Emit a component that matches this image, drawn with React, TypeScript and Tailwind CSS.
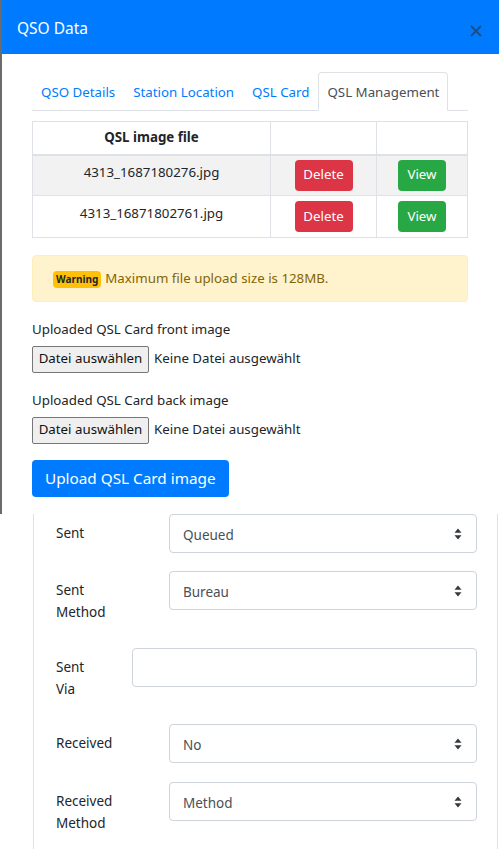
import React from "react";

// QSO modal (QSL Management tab) stacked over a crop of the QSL form below it.

const font = { fontFamily: '"Segoe UI", "Noto Sans", "Liberation Sans", sans-serif' };

function SortIcon(): JSX.Element {
  return (
    <svg width="8" height="12" viewBox="0 0 8 12" className="shrink-0">
      <path d="M4 0.5 L7.5 4.8 L0.5 4.8 Z" fill="#343a40" />
      <path d="M4 11.5 L7.5 7.2 L0.5 7.2 Z" fill="#343a40" />
    </svg>
  );
}

function Select({ value, left = "ml-[113px]" }: { value: string; left?: string }): JSX.Element {
  return (
    <div
      className={`${left} flex h-[39px] flex-1 items-center justify-between rounded-[4px] border border-[#ced4da] pl-[13px] pr-[14px] text-[13.5px] text-[#495057]`}
    >
      <span className="mt-[2px]">{value}</span>
      <SortIcon />
    </div>
  );
}

function FileInput(): JSX.Element {
  return (
    <div className="flex items-center text-[13.3px] text-[#212529]">
      <div className="flex h-[27px] w-[117px] items-center justify-center rounded-[2px] border border-[#767676] bg-[#efefef] text-[#111]">
        Datei auswählen
      </div>
      <span className="ml-[5px]">Keine Datei ausgewählt</span>
    </div>
  );
}

const files = ["4313_1687180276.jpg", "4313_16871802761.jpg"];

export default function App(): JSX.Element {
  return (
    <div className="relative h-[849px] w-[499px] overflow-hidden bg-white" style={font}>
      {/* modal */}
      <div className="h-[514px] border-l-[2px] border-[#6b6b6b] bg-white">
        <div className="flex h-[54px] items-center justify-between bg-[#007bff] pl-[15px] pr-[17px]">
          <span className="mt-[3px] text-[15.5px] text-white">QSO Data</span>
          <svg width="12" height="12" viewBox="0 0 12 12" className="mt-[8px]">
            <path d="M1 1 L11 11 M11 1 L1 11" stroke="#1d4f86" strokeWidth="2" />
          </svg>
        </div>

        <div className="pl-[30px] pr-[31px]">
          {/* tabs */}
          <div className="mt-[18px] flex h-[39px] border-b border-[#dee2e6] text-[13.3px]">
            <div className="px-[9px] pt-[11px] text-[#007bff]">QSO Details</div>
            <div className="px-[9px] pt-[11px] text-[#007bff]">Station Location</div>
            <div className="px-[9px] pt-[11px] text-[#007bff]">QSL Card</div>
            <div className="-mb-px rounded-t-[4px] border border-b-white border-[#dee2e6] bg-white px-[8px] pt-[10px] text-[#495057]">
              QSL Management
            </div>
          </div>

          {/* table */}
          <table className="mt-[10px] w-[436px] border-collapse text-[13.3px] text-[#212529]">
            <thead>
              <tr className="h-[33px]">
                <th className="w-[238px] border border-b-2 border-[#dee2e6] font-bold">QSL image file</th>
                <th className="w-[106px] border border-b-2 border-[#dee2e6]"></th>
                <th className="border border-b-2 border-[#dee2e6]"></th>
              </tr>
            </thead>
            <tbody>
              {files.map((f, i) => (
                <tr key={f} className={i === 0 ? "h-[41px] bg-[#f2f2f2]" : "h-[42px]"}>
                  <td className="border border-[#dee2e6] pb-[5px] text-center align-middle">{f}</td>
                  <td className="border border-[#dee2e6] text-center">
                    <span className="inline-flex h-[31px] w-[58px] items-center justify-center rounded-[4px] bg-[#dc3545] text-white">
                      Delete
                    </span>
                  </td>
                  <td className="border border-[#dee2e6] text-center">
                    <span className="inline-flex h-[31px] w-[48px] items-center justify-center rounded-[4px] bg-[#28a745] text-white">
                      View
                    </span>
                  </td>
                </tr>
              ))}
            </tbody>
          </table>

          {/* alert */}
          <div className="mt-[17px] flex h-[47px] w-[436px] items-center rounded-[4px] border border-[#ffeeba] bg-[#fff3cd] pl-[20px] pt-[1px] text-[13.3px] text-[#856404]">
            <span className="mr-[4px] rounded-[4px] bg-[#ffc107] px-[3px] py-[1px] text-[10px] font-bold text-[#212529]">
              Warning
            </span>
            Maximum file upload size is 128MB.
          </div>

          <div className="mt-[18px] text-[13.3px] text-[#212529]">Uploaded QSL Card front image</div>
          <div className="mt-[6px]">
            <FileInput />
          </div>
          <div className="mt-[18px] text-[13.3px] text-[#212529]">Uploaded QSL Card back image</div>
          <div className="mt-[6px]">
            <FileInput />
          </div>

          <div className="mt-[16px] inline-flex h-[37px] items-center rounded-[4px] bg-[#007bff] px-[13px] text-[15.3px] text-white">
            Upload QSL Card image
          </div>
        </div>
      </div>

      {/* lower form crop */}
      <div className="ml-[33px] mr-[1px] h-[335px] border-x border-[#dee2e6] pl-[22px] pr-[20px] text-[13.5px] leading-[22px] text-[#212529]">
        <div className="flex h-[57px] items-start">
          <span className="mt-[8px] w-0 whitespace-nowrap">Sent</span>
          <Select value="Queued" />
        </div>
        <div className="flex h-[77px] items-start">
          <span className="mt-[8px] w-0 whitespace-nowrap">
            Sent
            <br />
            Method
          </span>
          <Select value="Bureau" />
        </div>
        <div className="flex h-[76px] items-start">
          <span className="mt-[8px] w-0 whitespace-nowrap">
            Sent
            <br />
            Via
          </span>
          <div className="ml-[76px] h-[39px] flex-1 rounded-[4px] border border-[#ced4da]" />
        </div>
        <div className="flex h-[58px] items-start">
          <span className="mt-[8px] w-0 whitespace-nowrap">Received</span>
          <Select value="No" />
        </div>
        <div className="flex items-start">
          <span className="mt-[8px] w-0 whitespace-nowrap">
            Received
            <br />
            Method
          </span>
          <Select value="Method" />
        </div>
      </div>
    </div>
  );
}
